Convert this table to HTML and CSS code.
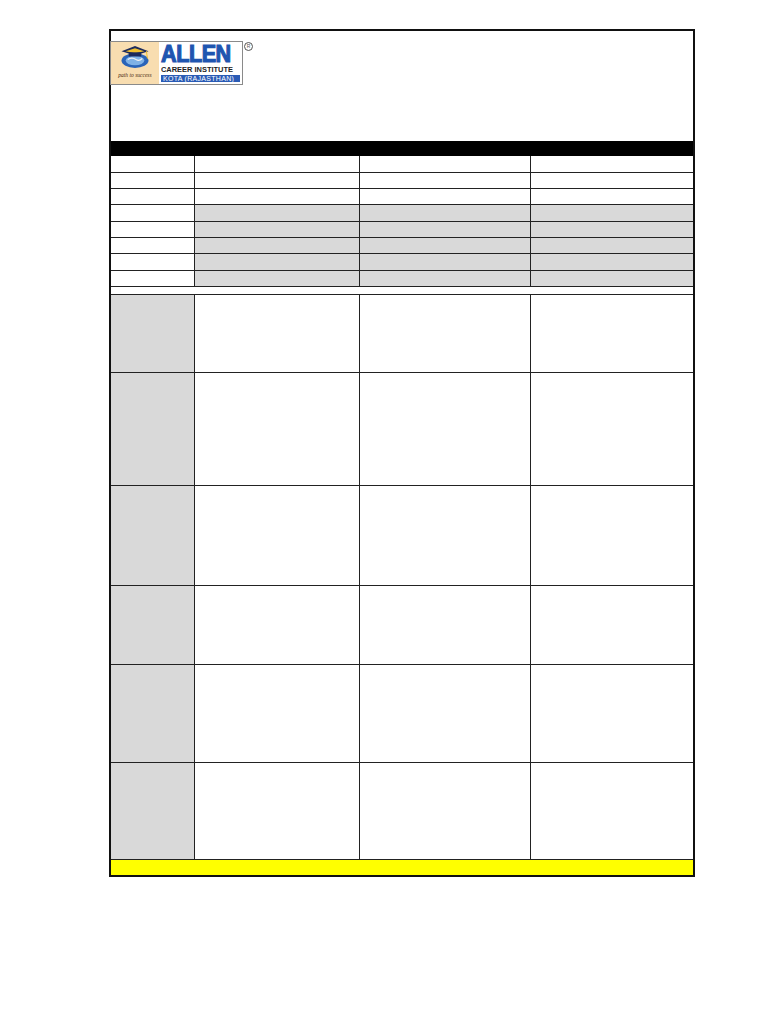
FILE: index.html
```html
<!DOCTYPE html>
<html>
<head>
<meta charset="utf-8">
<link rel="stylesheet" href="styles.css">
</head>
<body>
<div class="sheet">
  <div class="header">
    <div class="logo">
      <div class="logo-left">
        <svg class="emblem" width="38" height="27" viewBox="0 0 36 26">
          <ellipse cx="18" cy="16" rx="13" ry="7" fill="#2a64b8"/>
          <ellipse cx="18" cy="16" rx="9" ry="4.5" fill="#7fb2e6"/>
          <path d="M11 15 q4 -3 8 0 q3 2 6 -1" stroke="#f2f2f2" stroke-width="1.2" fill="none"/>
          <polygon points="18,2 31,7 18,11 5,7" fill="#1d2b5c"/>
          <polygon points="18,4 27,7 18,9 9,7" fill="#f0c030"/>
          <rect x="12" y="8" width="12" height="4" fill="#1d2b5c"/>
          <line x1="29" y1="7" x2="30" y2="14" stroke="#f0c030" stroke-width="1"/>
        </svg>
        <span class="tagline">path to success</span>
      </div>
      <div class="logo-right">
        <span class="allen">ALLEN</span>
        <span class="career">CAREER INSTITUTE</span>
        <span class="kota">KOTA (RAJASTHAN)</span>
      </div>
    </div>
    <span class="reg">R</span>
  </div>
  <div class="blackbar"></div>
  <table class="grid">
    <colgroup>
      <col class="c1"><col class="c2"><col class="c3"><col class="c4">
    </colgroup>
    <tr class="sm"><td></td><td></td><td></td><td></td></tr>
    <tr class="sm"><td></td><td></td><td></td><td></td></tr>
    <tr class="sm"><td></td><td></td><td></td><td></td></tr>
    <tr class="sm shade"><td></td><td></td><td></td><td></td></tr>
    <tr class="sm shade"><td></td><td></td><td></td><td></td></tr>
    <tr class="sm shade"><td></td><td></td><td></td><td></td></tr>
    <tr class="sm shade"><td></td><td></td><td></td><td></td></tr>
    <tr class="sm shade"><td></td><td></td><td></td><td></td></tr>
    <tr class="strip"><td colspan="4"></td></tr>
    <tr class="big h1"><td></td><td></td><td></td><td></td></tr>
    <tr class="big h2"><td></td><td></td><td></td><td></td></tr>
    <tr class="big h3"><td></td><td></td><td></td><td></td></tr>
    <tr class="big h4"><td></td><td></td><td></td><td></td></tr>
    <tr class="big h5"><td></td><td></td><td></td><td></td></tr>
    <tr class="big h6"><td></td><td></td><td></td><td></td></tr>
    <tr class="yellow"><td colspan="4"></td></tr>
  </table>
</div>
</body>
</html>
```
FILE: styles.css
```css
html, body {
  margin: 0;
  padding: 0;
  background: #ffffff;
  font-family: "Liberation Sans", Arial, sans-serif;
}
.sheet {
  margin-top: 29px;
  margin-left: 109px;
  width: 582px;
  border: 2px solid #111;
  border-bottom-width: 2px;
}
.header {
  position: relative;
  height: 110px;
}
.logo {
  position: absolute;
  left: -1px;
  top: 10px;
  width: 131px;
  height: 42px;
  border: 1px solid #8a8a8a;
  display: flex;
  background: #fff;
}
.logo-left {
  width: 48px;
  background: #f8ddb0;
  display: flex;
  flex-direction: column;
  align-items: center;
  padding-top: 2px;
  box-sizing: border-box;
}
.emblem {
  display: block;
}
.tagline {
  font-family: "Liberation Serif", serif;
  font-style: italic;
  font-size: 5.5px;
  color: #4a2a10;
  margin-top: 1px;
  white-space: nowrap;
}
.logo-right {
  flex: 1;
  display: flex;
  flex-direction: column;
  align-items: flex-start;
  padding-left: 2px;
}
.allen {
  font-weight: bold;
  font-size: 24px;
  line-height: 20px;
  height: 20px;
  color: #1f55b0;
  letter-spacing: -0.5px;
  transform: scaleX(0.9);
  transform-origin: left center;
  margin-top: 2px;
  -webkit-text-stroke: 1.2px #1f55b0;
}
.career {
  font-weight: bold;
  font-size: 8px;
  line-height: 8px;
  height: 8px;
  color: #222;
  margin-top: 2px;
  white-space: nowrap;
  transform: scaleX(0.93);
  transform-origin: left center;
}
.kota {
  margin-top: 1px;
  background: #2a5bb5;
  color: #fff;
  font-size: 7px;
  line-height: 7px;
  padding: 0 2px;
  letter-spacing: 0.3px;
  white-space: nowrap;
  width: 79px;
  box-sizing: border-box;
}
.reg {
  position: absolute;
  left: 133px;
  top: 11px;
  width: 7px;
  height: 7px;
  border: 1px solid #555;
  border-radius: 50%;
  font-size: 5px;
  line-height: 7px;
  text-align: center;
  color: #555;
}
.blackbar {
  height: 15px;
  background: #000;
}
.grid {
  border-collapse: collapse;
  table-layout: fixed;
  width: 582px;
}
.c1 { width: 83px; }
.c2 { width: 165px; }
.c3 { width: 171px; }
.c4 { width: 163px; }
.grid td {
  padding: 0;
  border: 1px solid #222;
}
.grid tr td:first-child { border-left: none; }
.grid tr td:last-child { border-right: none; }
.grid tr.sm:first-child td { border-top: none; }
.sm { height: 16.33px; }
.shade td { background: #d9d9d9; }
.shade td:first-child { background: #fff; }
.strip td { height: 7px; background: #fff; }
.big td:first-child { background: #d9d9d9; }
.h1 { height: 77.6px; }
.h2 { height: 113.4px; }
.h3 { height: 100px; }
.h4 { height: 78.6px; }
.h5 { height: 98px; }
.h6 { height: 97.4px; }
.yellow td {
  height: 15px;
  background: #ffff00;
  border-bottom: none;
}
```
